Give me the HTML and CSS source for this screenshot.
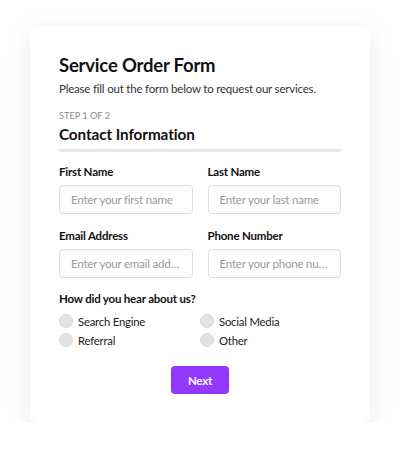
FILE: index.html
```html
<!DOCTYPE html>
<html>
<head>
<meta charset="utf-8">
<link rel="stylesheet" href="styles.css">
</head>
<body>
<div class="card">
  <h1 class="title">Service Order Form</h1>
  <p class="subtitle">Please fill out the form below to request our services.</p>
  <div class="step">STEP 1 OF 2</div>
  <h2 class="section">Contact Information</h2>
  <div class="divider"></div>
  <div class="grid">
    <div class="field">
      <label class="label">First Name</label>
      <input class="input" placeholder="Enter your first name">
    </div>
    <div class="field">
      <label class="label">Last Name</label>
      <input class="input" placeholder="Enter your last name">
    </div>
    <div class="field">
      <label class="label">Email Address</label>
      <input class="input" placeholder="Enter your email address">
    </div>
    <div class="field">
      <label class="label">Phone Number</label>
      <input class="input" placeholder="Enter your phone number">
    </div>
  </div>
  <div class="label hear">How did you hear about us?</div>
  <div class="radios">
    <div class="radio"><span class="dot"></span>Search Engine</div>
    <div class="radio"><span class="dot"></span>Social Media</div>
    <div class="radio"><span class="dot"></span>Referral</div>
    <div class="radio"><span class="dot"></span>Other</div>
  </div>
  <div class="actions"><button class="next">Next</button></div>
</div>
</body>
</html>
```
FILE: styles.css
```css
* { box-sizing: border-box; }
body {
  margin: 0;
  padding-top: 26px;
  background: #fff;
  font-family: Lato, "Noto Sans", sans-serif;
  color: #111;
}
.card {
  width: 340px;
  margin: 0 auto;
  background: #fff;
  border-radius: 8px;
  box-shadow: 0 6px 28px rgba(0,0,0,0.09);
  padding: 27px 29px 29px;
}
.title {
  margin: 0;
  font-size: 18.5px;
  letter-spacing: -0.2px;
  line-height: 24px;
  font-weight: 700;
  color: #111;
}
.subtitle {
  margin: 3px 0 0;
  font-size: 11.5px;
  letter-spacing: -0.2px;
  line-height: 18px;
  color: #333;
}
.step {
  margin-top: 11px;
  font-size: 9.2px;
  line-height: 14px;
  color: #8a8a8a;
}
.section {
  margin: 1px 0 0;
  font-size: 15.3px;
  letter-spacing: -0.1px;
  line-height: 20px;
  font-weight: 700;
}
.divider {
  margin-top: 5px;
  height: 3px;
  background: #e6e6e6;
}
.grid {
  margin-top: 12px;
  display: grid;
  grid-template-columns: 1fr 1fr;
  column-gap: 15px;
  row-gap: 14px;
}
.field { display: flex; flex-direction: column; min-width: 0; }
.label {
  font-size: 11.5px;
  letter-spacing: -0.2px;
  line-height: 16px;
  font-weight: 700;
  color: #111;
}
.input {
  margin-top: 5px;
  height: 29px;
  width: 100%;
  border: 1px solid #dedede;
  border-radius: 4px;
  padding: 0 11px;
  font-family: inherit;
  font-size: 11.5px;
  letter-spacing: -0.2px;
  color: #333;
  text-overflow: ellipsis;
  outline: none;
}
.input::placeholder { color: #9a9a9a; }
.hear { margin-top: 13px; }
.radios {
  margin-top: 7px;
  display: grid;
  grid-template-columns: 1fr 1fr;
  row-gap: 5px;
}
.radio {
  display: flex;
  align-items: center;
  gap: 5px;
  height: 14px;
  font-size: 11.3px;
  letter-spacing: -0.2px;
  color: #222;
}
.dot {
  width: 14px;
  height: 14px;
  border-radius: 50%;
  background: #e2e2e2;
  border: 1px solid #d8d8d8;
  flex: none;
}
.actions {
  margin-top: 19px;
  display: flex;
  justify-content: center;
}
.next {
  width: 58px;
  height: 28px;
  border: none;
  border-radius: 4px;
  background: #9437ff;
  color: #fff;
  font-family: inherit;
  font-size: 11.5px;
  letter-spacing: -0.2px;
  font-weight: 700;
}
```
